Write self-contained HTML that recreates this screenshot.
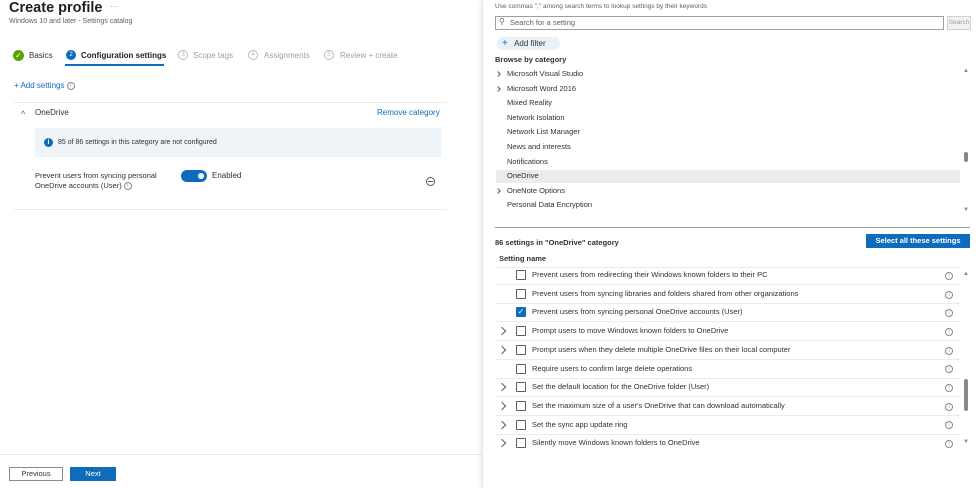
<!DOCTYPE html>
<html><head><meta charset="utf-8"><style>
*{margin:0;padding:0;box-sizing:border-box}
body{width:980px;height:488px;overflow:hidden;background:#fff;font-family:"Liberation Sans",sans-serif;color:#323130;position:relative;font-size:8px}
.a{position:absolute;white-space:nowrap}
.info{display:inline-block;width:8px;height:8px;border:1px solid #888;border-radius:50%;font-size:5px;line-height:6px;text-align:center;color:#888;vertical-align:middle}
.cb{position:absolute;width:10px;height:10px;border:1px solid #605e5c;border-radius:1px;background:#fff}
.chev{position:absolute;width:6px;height:6px;border-right:1px solid #605e5c;border-top:1px solid #605e5c;transform:rotate(45deg)}
.ln{position:absolute;height:1px;background:#edebe9}
</style></head><body>
<!-- left -->
<div class="a" style="left:9px;top:0px;font-size:14.5px;color:#201f1e;font-weight:600;">Create profile</div>
<div class="a" style="left:110px;top:2px;font-size:8px;color:#888">···</div>
<div class="a" style="left:9px;top:18px;font-size:7px;color:#605e5c">Windows 10 and later - Settings catalog</div>

<div class="a" style="left:13px;top:50px;width:11px;height:11px;border-radius:50%;background:#57a300;color:#fff;font-size:8px;line-height:11px;text-align:center">✓</div>
<div class="a" style="left:29px;top:51px;font-size:8px">Basics</div>
<div class="a" style="left:66px;top:50px;width:10px;height:10px;border-radius:50%;background:#0f6cbd;color:#fff;font-size:6px;line-height:10px;text-align:center">2</div>
<div class="a" style="left:81px;top:51px;font-size:8px;font-weight:700;color:#201f1e">Configuration settings</div>
<div class="a" style="left:65px;top:64px;width:99px;height:2px;background:#0f6cbd"></div>
<div class="a" style="left:178px;top:50px;width:10px;height:10px;border-radius:50%;border:1px solid #bbb;color:#bbb;font-size:6px;line-height:8px;text-align:center">3</div>
<div class="a" style="left:193px;top:51px;font-size:8px;color:#a19f9d">Scope tags</div>
<div class="a" style="left:248px;top:50px;width:10px;height:10px;border-radius:50%;border:1px solid #bbb;color:#bbb;font-size:6px;line-height:8px;text-align:center">4</div>
<div class="a" style="left:264px;top:51px;font-size:8px;color:#a19f9d">Assignments</div>
<div class="a" style="left:324px;top:50px;width:10px;height:10px;border-radius:50%;border:1px solid #bbb;color:#bbb;font-size:6px;line-height:8px;text-align:center">5</div>
<div class="a" style="left:340px;top:51px;font-size:8px;color:#a19f9d">Review + create</div>

<div class="a" style="left:14px;top:81px;font-size:8px;color:#0f6cbd">+ Add settings <span class="info">i</span></div>
<div class="ln" style="left:14px;top:102px;width:433px"></div>
<div class="a" style="left:21px;top:109px;font-size:9px;color:#605e5c">^</div>
<div class="a" style="left:35px;top:108px;font-size:8px">OneDrive</div>
<div class="a" style="left:377px;top:108px;font-size:8px;color:#0f6cbd">Remove category</div>
<div class="a" style="left:35px;top:128px;width:406px;height:29px;background:#eff4f9"></div>
<div class="a" style="left:44px;top:138px;width:9px;height:9px;border-radius:50%;background:#0f6cbd;color:#fff;font-size:7px;line-height:9px;text-align:center;font-weight:700">i</div>
<div class="a" style="left:58px;top:139px;font-size:7px">85 of 86 settings in this category are not configured</div>
<div class="a" style="left:35px;top:171px;font-size:7.5px;line-height:10px">Prevent users from syncing personal<br>OneDrive accounts (User) <span class="info">i</span></div>
<div class="a" style="left:181px;top:170px;width:26px;height:12px;border-radius:6px;background:#0f6cbd"><div style="position:absolute;right:3px;top:3px;width:6px;height:6px;border-radius:50%;background:#fff"></div></div>
<div class="a" style="left:212px;top:171px;font-size:8px">Enabled</div>
<div class="a" style="left:426px;top:177px;width:9px;height:9px;border:1px solid #555;border-radius:50%"><div style="position:absolute;left:1px;top:3px;width:5px;height:1px;background:#555"></div></div>
<div class="ln" style="left:14px;top:209px;width:433px"></div>

<div class="ln" style="left:0;top:454px;width:482px"></div>
<div class="a" style="left:9px;top:467px;width:54px;height:14px;border:1px solid #8a8886;font-size:7.5px;line-height:12px;text-align:center">Previous</div>
<div class="a" style="left:70px;top:467px;width:46px;height:14px;background:#0f6cbd;color:#fff;font-size:7.5px;line-height:14px;text-align:center">Next</div>

<!-- right panel -->
<div class="a" style="left:482px;top:0;width:498px;height:488px;background:#fff;box-shadow:-2px 0 4px rgba(0,0,0,.08);border-left:1px solid #e6e6e6"></div>
<div class="a" style="left:495px;top:3px;font-size:6.5px;color:#605e5c">Use commas "," among search terms to lookup settings by their keywords</div>
<div class="a" style="left:495px;top:16px;width:449px;height:14px;border:1px solid #a19f9d;font-size:7.5px;line-height:12px;padding-left:14px;color:#605e5c">Search for a setting</div>
<div class="a" style="left:499px;top:17px;font-size:8px;color:#605e5c">⚲</div>
<div class="a" style="left:947px;top:16px;width:24px;height:14px;background:#f3f2f1;border:1px solid #d2d0ce;font-size:6.5px;line-height:12px;text-align:center;color:#a19f9d">Search</div>
<div class="a" style="left:497px;top:37px;width:63px;height:13px;border-radius:7px;background:#e8f0f8;font-size:8px;line-height:13px;padding-left:5px"><span style="color:#0f6cbd;font-size:10px">+</span>&nbsp;&nbsp; Add filter</div>
<div class="a" style="left:495px;top:55px;font-size:7.5px;font-weight:700">Browse by category</div>

<div class="a" style="left:496px;top:170px;width:464px;height:13px;background:#edebe9"></div>
<div class="a" style="left:507px;top:67px;font-size:7.5px;line-height:14.6px;white-space:pre">Microsoft Visual Studio
Microsoft Word 2016
Mixed Reality
Network Isolation
Network List Manager
News and interests
Notifications
OneDrive
OneNote Options
Personal Data Encryption</div>
<div class="chev" style="left:496px;top:72px;width:4px;height:4px"></div>
<div class="chev" style="left:496px;top:87px;width:4px;height:4px"></div>
<div class="chev" style="left:496px;top:189px;width:4px;height:4px"></div>
<div class="a" style="left:963px;top:68px;font-size:6px;color:#888">▲</div>
<div class="a" style="left:964px;top:152px;width:4px;height:10px;border-radius:2px;background:#888"></div>
<div class="a" style="left:963px;top:207px;font-size:6px;color:#888">▼</div>
<div class="a" style="left:495px;top:227px;width:475px;height:1px;background:#a19f9d"></div>

<div class="a" style="left:495px;top:238px;font-size:7.5px;font-weight:700">86 settings in "OneDrive" category</div>
<div class="a" style="left:866px;top:234px;width:104px;height:14px;background:#0f6cbd;color:#fff;font-size:7.5px;font-weight:700;line-height:14px;text-align:center">Select all these settings</div>
<div class="a" style="left:499px;top:254px;font-size:7.5px;font-weight:700">Setting name</div>
<div class="ln" style="left:495px;top:267px;width:465px"></div>

<div id="rows"></div>
<div class="a" style="left:963px;top:271px;font-size:6px;color:#888">▲</div>
<div class="a" style="left:964px;top:379px;width:4px;height:32px;border-radius:2px;background:#888"></div>
<div class="a" style="left:963px;top:439px;font-size:6px;color:#888">▼</div>
<script>
var t=["Prevent users from redirecting their Windows known folders to their PC","Prevent users from syncing libraries and folders shared from other organizations","Prevent users from syncing personal OneDrive accounts (User)","Prompt users to move Windows known folders to OneDrive","Prompt users when they delete multiple OneDrive files on their local computer","Require users to confirm large delete operations","Set the default location for the OneDrive folder (User)","Set the maximum size of a user's OneDrive that can download automatically","Set the sync app update ring","Silently move Windows known folders to OneDrive"];
var ch=[0,0,0,1,1,0,1,1,1,1],h="";
for(var i=0;i<10;i++){var y=275+i*18.7;
h+='<div class="'+(i==2?'cb" style="background:#0f6cbd;border-color:#0f6cbd;color:#fff;font-size:8px;line-height:8px;text-align:center;':'cb" style="')+'left:516px;top:'+(y-5)+'px">'+(i==2?'✓':'')+'</div>';
h+='<div class="a" style="left:532px;top:'+(y-5)+'px;font-size:7.5px">'+t[i]+'</div>';
h+='<div class="a" style="left:945px;top:'+(y-4)+'px"><span class="info">i</span></div>';
if(ch[i])h+='<div class="chev" style="left:499px;top:'+(y-3)+'px"></div>';
if(i<9)h+='<div class="ln" style="left:495px;top:'+(y+9)+'px;width:465px"></div>';}
document.getElementById("rows").innerHTML=h;
</script>
</body></html>
